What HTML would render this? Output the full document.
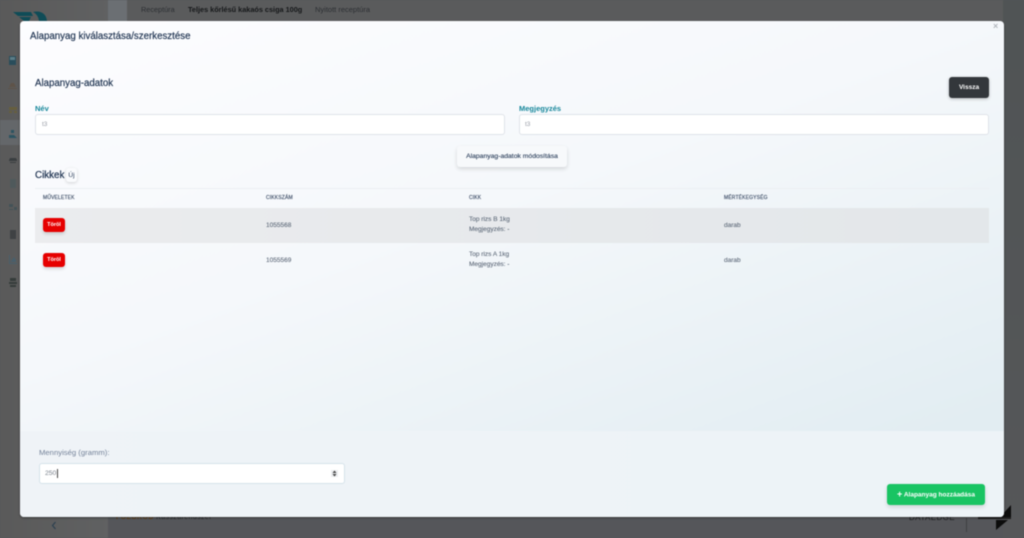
<!DOCTYPE html>
<html lang="hu"><head><meta charset="utf-8"><title>Alapanyag</title>
<style>
*{box-sizing:border-box}
html,body{margin:0;padding:0;width:1024px;height:538px;overflow:hidden;background:#55585a;font-family:"Liberation Sans",sans-serif}
.abs,.abs *{position:absolute}
.abs{filter:blur(.45px)}
.t{white-space:nowrap;line-height:1}
#modal{left:20px;top:21px;width:984px;height:496px;border-radius:4px;background:linear-gradient(160deg,#fdfdff 0%,#f5f8fb 42%,#e2edf2 88%);box-shadow:0 1px 2px rgba(0,0,0,.4);overflow:hidden}
.inp{background:#fff;border:1px solid #dfe3e9;border-radius:3px;height:21px;top:114px}
.th{font-size:5px;letter-spacing:.15px;color:#3f4f68;top:195.500px;-webkit-text-stroke:.15px #3f4f68}
.td{font-size:6.500px;color:#5d6878;-webkit-text-stroke:.08px #5d6878}
.btnr{left:43px;width:22px;height:14px;background:#e60000;border-radius:3px;color:#fff;font-size:5.500px;font-weight:bold;text-align:center;line-height:14px;box-shadow:0 2px 3px rgba(0,0,0,.15)}
</style></head><body>
<div class="abs" style="left:0;top:0;width:1024px;height:538px">
<div style="left:0;top:0;width:108px;height:538px;background:linear-gradient(90deg,#5a5a5a,#606162)"></div>
<div style="left:108px;top:0;width:19px;height:21px;background:#6b6f73"></div>
<div style="left:127px;top:0;width:897px;height:538px;background:#5a5b5c"></div>
<div style="left:1003px;top:0;width:21px;height:538px;background:linear-gradient(180deg,#505455,#565759)"></div>
<div style="left:108px;top:518px;width:895px;height:20px;background:#55565a"></div>
<div style="left:0;top:120px;width:108px;height:25px;background:#64676a"></div>
<div class="t" style="left:141px;top:6px;font-size:7.300px;color:#2c2f33">Receptúra</div>
<div class="t" style="left:188px;top:6px;font-size:7.300px;font-weight:bold;color:#151719">Teljes kőrlésű kakaós csiga 100g</div>
<div class="t" style="left:315px;top:6px;font-size:7.500px;color:#2c2f33">Nyitott receptúra</div>
<svg style="left:13px;top:11px" width="34" height="11" viewBox="0 0 34 11"><path d="M0 1H18L20 5H5ZM6 6H18L16 10H11Z" fill="#0f4c57"/><path d="M20 1C28 -1 34 3 34 11H26C26 7 24 3 20 1Z" fill="#0f4c57"/></svg>
<svg style="left:7px;top:52px;opacity:.8" width="10" height="240" viewBox="0 0 10 240">
<path d="M2 4H9V13H2Z" fill="#1e4a5b"/><path d="M3 5H8V8H3Z" fill="#5d8694"/>
<path d="M2 35H9L7 31H4ZM1 36H10V37H1Z" fill="#5f5245"/>
<path d="M2 55H10V58H2ZM2 59H5V61H2ZM7 59H10V61H7Z" fill="#6a5f38"/>
<path d="M4 78H7V81H4ZM2 83H7V85H2ZM7 83L10 86H2V85H7Z" fill="#1f4f5f"/>
<path d="M3 106H9L10 108V109H2V108ZM3 110H9V111H3Z" fill="#32373a"/>
<path d="M3 127H9V136H3Z" fill="#4d595c"/>
<path d="M2 152H6V155H2ZM7 155H10V158H7ZM2 157H6V158H2Z" fill="#3f5157"/>
<path d="M3 178H9V187H3Z" fill="#393d3f"/>
<path d="M2 203H3V211H10V212H2ZM4 209L7 205L9 208V210H4Z" fill="#456070"/>
<path d="M3 226H9V229H3ZM2 230H10V232H2ZM3 233H9V235H3Z" fill="#2c3532"/>
</svg>
<svg style="left:51px;top:521px" width="6" height="9" viewBox="0 0 6 9"><path d="M4.500 1L1.500 4.500L4.500 8" fill="none" stroke="#2d4050" stroke-width="1.200"/></svg>
<div class="t" style="left:116px;top:514px;font-size:7px;letter-spacing:.4px;color:#26292c"><span style="position:static;color:#63421c;font-weight:bold">FŐZŐKÖD</span> Kasszarendszer</div>
<div class="t" style="left:909px;top:514px;font-size:8px;letter-spacing:.4px;color:#1b1d1f">DATAEDGE</div>
<div style="left:966px;top:518px;width:1px;height:14px;background:#3e4042"></div>
<div style="left:978px;top:517px;width:33px;height:2px;background:#1c1c1c"></div>
<svg style="left:994px;top:505px" width="20" height="25" viewBox="0 0 20 25"><path d="M17 0V12H6ZM2 25V15H14Z" fill="#0c0c0c"/></svg>

<div id="modal"></div>
<div style="left:20px;top:431px;width:984px;height:86px;background:linear-gradient(90deg,#eff3f7,#edf3f7);border-radius:0 0 4px 4px"></div>
<div class="t" style="left:30px;top:32px;font-size:9.700px;color:#263a57;-webkit-text-stroke:.2px #263a57">Alapanyag kiválasztása/szerkesztése</div>
<div class="t" style="left:993px;top:22px;font-size:9px;font-weight:bold;color:#b3b8be">×</div>
<div class="t" style="left:35px;top:79px;font-size:9.700px;color:#263a57;-webkit-text-stroke:.2px #263a57">Alapanyag-adatok</div>
<div style="left:949px;top:77px;width:40px;height:21px;background:#33373b;border-radius:3px;box-shadow:0 1px 3px rgba(0,0,0,.25);color:#fff;font-size:6.500px;font-weight:bold;text-align:center;line-height:21px">Vissza</div>
<div class="t" style="left:35px;top:105px;font-size:7.500px;font-weight:bold;color:#17879b">Név</div>
<div class="t" style="left:519px;top:105px;font-size:7.500px;font-weight:bold;color:#17879b">Megjegyzés</div>
<div class="inp" style="left:35px;width:470px"></div>
<div class="inp" style="left:519px;width:470px"></div>
<div class="t" style="left:42px;top:122px;font-size:6.500px;color:#9a9fa8">t3</div>
<div class="t" style="left:525px;top:122px;font-size:6.500px;color:#9a9fa8">t3</div>
<div style="left:457px;top:146px;width:110px;height:21px;background:#f7f9fb;border-radius:3px;box-shadow:0 2px 4px rgba(0,0,0,.14);color:#263a57;font-size:6.800px;text-align:center;line-height:22px;-webkit-text-stroke:.1px #263a57">Alapanyag-adatok módosítása</div>
<div class="t" style="left:35px;top:170.500px;font-size:9.800px;color:#263a57;-webkit-text-stroke:.25px #263a57">Cikkek</div>
<div style="left:66px;top:168px;width:11px;height:14px;background:#fafbfd;border-radius:3px;box-shadow:0 1px 3px rgba(0,0,0,.16);color:#263a57;font-size:6.500px;text-align:center;line-height:15px">Új</div>
<div style="left:35px;top:188px;width:954px;height:1px;background:#eceff3"></div>
<div class="t th" style="left:43px">MŰVELETEK</div>
<div class="t th" style="left:266px">CIKKSZÁM</div>
<div class="t th" style="left:469px">CIKK</div>
<div class="t th" style="left:724px">MÉRTÉKEGYSÉG</div>
<div style="left:35px;top:208px;width:954px;height:35px;background:linear-gradient(90deg,#ebecee,#e3e7ea)"></div>
<div class="btnr" style="top:218px">Töröl</div>
<div class="btnr" style="top:253px">Töröl</div>
<div class="t td" style="left:266px;top:222.500px">1055568</div>
<div class="t td" style="left:266px;top:257.500px">1055569</div>
<div class="t td" style="left:469px;top:217px">Top rizs B 1kg</div>
<div class="t td" style="left:469px;top:227px">Megjegyzés: -</div>
<div class="t td" style="left:469px;top:252px">Top rizs A 1kg</div>
<div class="t td" style="left:469px;top:262px">Megjegyzés: -</div>
<div class="t td" style="left:724px;top:222.500px">darab</div>
<div class="t td" style="left:724px;top:257.500px">darab</div>
<div class="t" style="left:39px;top:449px;font-size:7.700px;color:#75839a">Mennyiség (gramm):</div>
<div style="left:39px;top:463px;width:306px;height:21px;background:#fff;border:1px solid #d5e2ea;border-radius:3px"></div>
<div class="t" style="left:45px;top:471px;font-size:6.800px;color:#7b828d">250</div>
<div style="left:56.500px;top:469px;width:.7px;height:9px;background:#444"></div>
<div style="left:331px;top:470px;width:7px;height:7px;background:#eceef0"></div>
<svg style="left:332px;top:470px" width="5" height="7" viewBox="0 0 5 7"><path d="M2.500 .5L4.500 3H.5ZM2.500 6.500L4.500 4H.5Z" fill="#444"/></svg>
<div style="left:887px;top:484px;width:98px;height:21px;background:#19c463;border-radius:3px;box-shadow:0 2px 4px rgba(0,0,0,.14);color:#fff;font-size:6.500px;font-weight:bold;text-align:center;line-height:21px"><span style="position:static;font-size:9px;vertical-align:-.5px">+</span> Alapanyag hozzáadása</div>
</div>
</body></html>
